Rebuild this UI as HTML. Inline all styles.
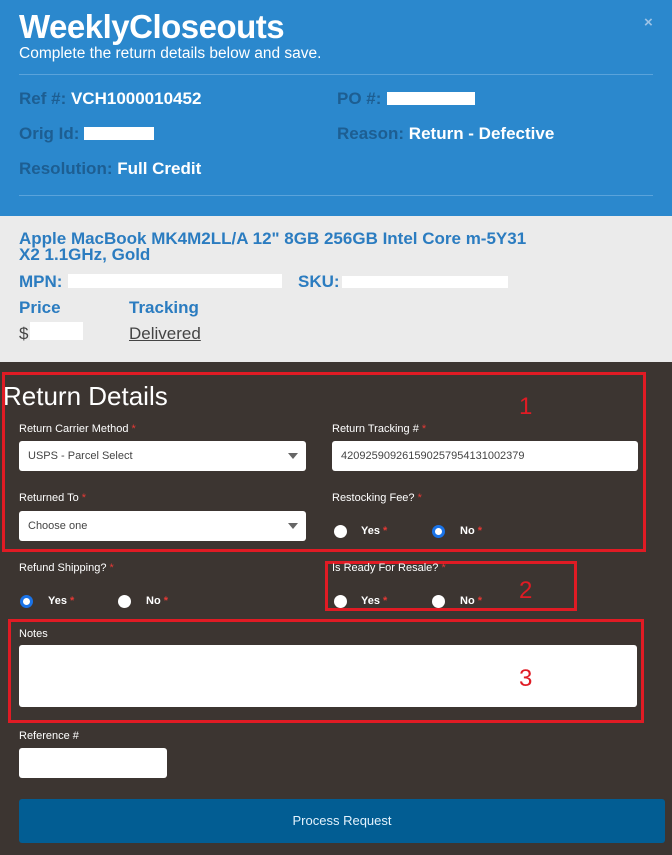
<!DOCTYPE html>
<html><head><meta charset="utf-8"><style>
*{margin:0;padding:0;box-sizing:border-box}
body{width:672px;height:855px;position:relative;overflow:hidden;font-family:"Liberation Sans",sans-serif;background:#3c3531}
.a{position:absolute;white-space:nowrap}
.hdr{position:absolute;left:0;top:0;width:672px;height:216px;background:#2b88cd}
.gray{position:absolute;left:0;top:216px;width:672px;height:146px;background:#ebebeb}
.hl{position:absolute;left:19px;width:634px;height:1px;background:#5aa3db}
.lbl{color:#1d5e92;font-weight:bold;font-size:17px}
.lbl b{color:#fff}
.blue{color:#2b7cc0;font-weight:bold}
.wl{color:#fff;font-size:11px}
.st{color:#e53935}
.box{position:absolute;border:3px solid #e01b24}
.inp{position:absolute;background:#fff;border-radius:3px;font-size:11px;color:#444;padding-left:9px;line-height:30px;height:30px}
.arr{position:absolute;right:8px;top:12px;width:0;height:0;border-left:5px solid transparent;border-right:5px solid transparent;border-top:6px solid #666}
.r{position:absolute;width:13px;height:13px;border-radius:50%;background:#fff}
.r.on{background:#fff;border:3.5px solid #1a73e8}
.rl{position:absolute;color:#fff;font-size:11px;font-weight:bold}
.num{position:absolute;color:#e01b24;font-size:24px;font-weight:300}
.wb{position:absolute;background:#fff}
</style></head><body>
<div class="hdr"></div>
<div class="a" style="left:19px;top:8px;color:#fff;font-size:33px;font-weight:bold;letter-spacing:-0.5px">WeeklyCloseouts</div>
<div class="a" style="left:19px;top:45px;color:#fff;font-size:15.5px">Complete the return details below and save.</div>
<div class="a" style="left:644px;top:14px;color:#9cc3e6;font-size:15px;font-weight:bold">×</div>
<div class="hl" style="top:74px"></div>
<div class="hl" style="top:195px"></div>
<div class="a lbl" style="left:19px;top:89px">Ref #: <b>VCH1000010452</b></div>
<div class="a lbl" style="left:337px;top:89px">PO #:</div>
<div class="wb" style="left:387px;top:92px;width:88px;height:13px"></div>
<div class="a lbl" style="left:19px;top:124px">Orig Id:</div>
<div class="wb" style="left:84px;top:127px;width:70px;height:13px"></div>
<div class="a lbl" style="left:337px;top:124px">Reason: <b>Return - Defective</b></div>
<div class="a lbl" style="left:19px;top:159px">Resolution: <b>Full Credit</b></div>
<div class="gray"></div>
<div class="a blue" style="left:19px;top:231px;font-size:17px;line-height:16px">Apple MacBook MK4M2LL/A 12" 8GB 256GB Intel Core m-5Y31<br>X2 1.1GHz, Gold</div>
<div class="a blue" style="left:19px;top:272px;font-size:17px">MPN:</div>
<div class="wb" style="left:68px;top:274px;width:214px;height:14px"></div>
<div class="a blue" style="left:298px;top:272px;font-size:17px">SKU:</div>
<div class="wb" style="left:342px;top:276px;width:166px;height:12px"></div>
<div class="a blue" style="left:19px;top:298px;font-size:17px">Price</div>
<div class="a blue" style="left:129px;top:298px;font-size:17px">Tracking</div>
<div class="a" style="left:19px;top:324px;font-size:17px;color:#444">$</div>
<div class="wb" style="left:30px;top:322px;width:53px;height:18px;background:#fff"></div>
<div class="a" style="left:129px;top:324px;font-size:17px;color:#444;text-decoration:underline">Delivered</div>

<div class="box" style="left:2px;top:372px;width:644px;height:180px"></div>
<div class="a" style="left:3px;top:381px;color:#fff;font-size:26px;font-weight:300">Return Details</div>
<div class="num" style="left:519px;top:393px">1</div>
<div class="a wl" style="left:19px;top:423px">Return Carrier Method <span class="st">*</span></div>
<div class="inp" style="left:19px;top:441px;width:287px">USPS - Parcel Select<div class="arr"></div></div>
<div class="a wl" style="left:332px;top:423px">Return Tracking # <span class="st">*</span></div>
<div class="inp" style="left:332px;top:441px;width:306px">420925909261590257954131002379</div>
<div class="a wl" style="left:19px;top:492px">Returned To <span class="st">*</span></div>
<div class="inp" style="left:19px;top:511px;width:287px">Choose one<div class="arr"></div></div>
<div class="a wl" style="left:332px;top:492px">Restocking Fee? <span class="st">*</span></div>
<div class="r" style="left:334px;top:525px"></div><div class="rl" style="left:361px;top:525px">Yes <span class="st">*</span></div>
<div class="r on" style="left:432px;top:525px"></div><div class="rl" style="left:460px;top:525px">No <span class="st">*</span></div>

<div class="a wl" style="left:19px;top:562px">Refund Shipping? <span class="st">*</span></div>
<div class="r on" style="left:20px;top:595px"></div><div class="rl" style="left:48px;top:595px">Yes <span class="st">*</span></div>
<div class="r" style="left:118px;top:595px"></div><div class="rl" style="left:146px;top:595px">No <span class="st">*</span></div>

<div class="box" style="left:325px;top:561px;width:252px;height:50px"></div>
<div class="a wl" style="left:332px;top:562px">Is Ready For Resale? <span class="st">*</span></div>
<div class="r" style="left:334px;top:595px"></div><div class="rl" style="left:361px;top:595px">Yes <span class="st">*</span></div>
<div class="r" style="left:432px;top:595px"></div><div class="rl" style="left:460px;top:595px">No <span class="st">*</span></div>
<div class="num" style="left:519px;top:577px">2</div>

<div class="box" style="left:8px;top:619px;width:636px;height:104px"></div>
<div class="a wl" style="left:19px;top:628px">Notes</div>
<div class="inp" style="left:19px;top:645px;width:618px;height:62px"></div>
<div class="num" style="left:519px;top:665px">3</div>

<div class="a wl" style="left:19px;top:730px">Reference #</div>
<div class="inp" style="left:19px;top:748px;width:148px"></div>
<div class="a" style="left:19px;top:799px;width:646px;height:44px;background:#025d93;border-radius:3px;color:#e3f2fd;font-size:13px;text-align:center;line-height:44px">Process Request</div>
</body></html>
